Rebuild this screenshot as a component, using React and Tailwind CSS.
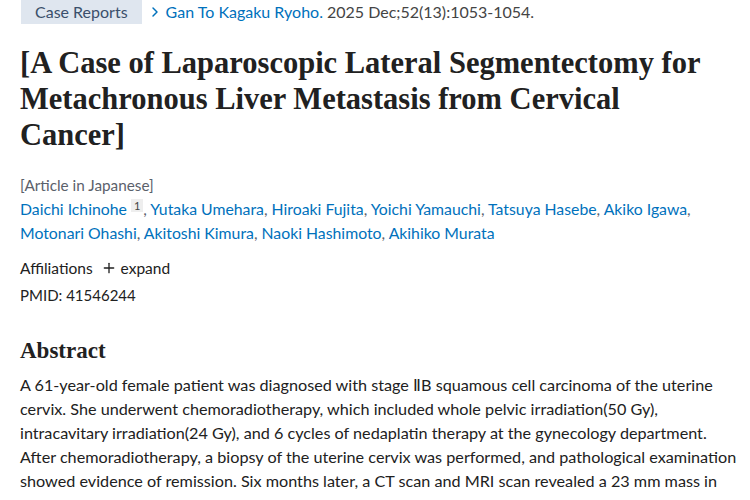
import { ChevronRight, Plus } from 'lucide-react'

const authors = [
  'Yutaka Umehara',
  'Hiroaki Fujita',
  'Yoichi Yamauchi',
  'Tatsuya Hasebe',
  'Akiko Igawa',
  'Motonari Ohashi',
  'Akitoshi Kimura',
  'Naoki Hashimoto',
  'Akihiko Murata',
]

const App = () => {
  return (
    <main className="min-h-screen bg-white pl-5 pr-1 font-['Lato','Liberation_Sans',sans-serif] text-[#212121]">
      {/* Header chips */}
      <div className="flex items-center h-6">
        <span className="ml-px h-6 px-[14px] flex items-center bg-[#dfe6ef] text-[16px] text-[#3a4f6b]">Case Reports</span>
        <ChevronRight className="ml-[5px] w-4 h-4 text-[#0071bc]" strokeWidth={2.2} />
        <a href="#" className="ml-[3px] text-[16px] text-[#0071bc]">Gan To Kagaku Ryoho.</a>
        <span className="ml-1 text-[16px] text-[#444]">2025 Dec;52(13):1053-1054.</span>
      </div>

      {/* Title */}
      <h1 className="mt-[21px] max-w-[705px] font-['Liberation_Serif',serif] font-bold text-[30.5px] leading-[36px] text-[#212121]">
        [A Case of Laparoscopic Lateral Segmentectomy for Metachronous Liver Metastasis from Cervical Cancer]
      </h1>

      {/* Meta */}
      <p className="mt-[20px] text-[15.3px] leading-6 text-[#5b616b]">[Article in Japanese]</p>
      <p className="text-[15.8px] leading-6 max-w-[700px]">
        <a href="#" className="text-[#0071bc]">Daichi Ichinohe</a>
        <sup className="ml-1 px-[3px] bg-[#eeeeee] text-[11px] text-[#444]">1</sup>
        {authors.map((name) => (
          <span key={name} className="text-[#5b616b]">
            , <a href="#" className="text-[#0071bc]">{name}</a>
          </span>
        ))}
      </p>

      <div className="mt-[11px] flex items-center gap-2 text-[15.5px] leading-6">
        <span>Affiliations</span>
        <button className="flex items-center gap-1 text-[#212121]">
          <Plus className="w-4 h-4" strokeWidth={2} />
          expand
        </button>
      </div>
      <p className="mt-[3px] text-[15px] leading-6">PMID: 41546244</p>

      {/* Abstract */}
      <h2 className="mt-[28px] font-['Liberation_Serif',serif] font-bold text-[23px] leading-8">Abstract</h2>
      <p className="mt-[6px] max-w-[722px] text-[16.2px] leading-6">
        A 61-year-old female patient was diagnosed with stage ⅡB squamous cell carcinoma of the uterine cervix. She underwent chemoradiotherapy, which included whole pelvic irradiation(50 Gy), intracavitary irradiation(24 Gy), and 6 cycles of nedaplatin therapy at the gynecology department. After chemoradiotherapy, a biopsy of the uterine cervix was performed, and pathological examination showed evidence of remission. Six months later, a CT scan and MRI scan revealed a 23 mm mass in
      </p>
    </main>
  )
}

export default App
